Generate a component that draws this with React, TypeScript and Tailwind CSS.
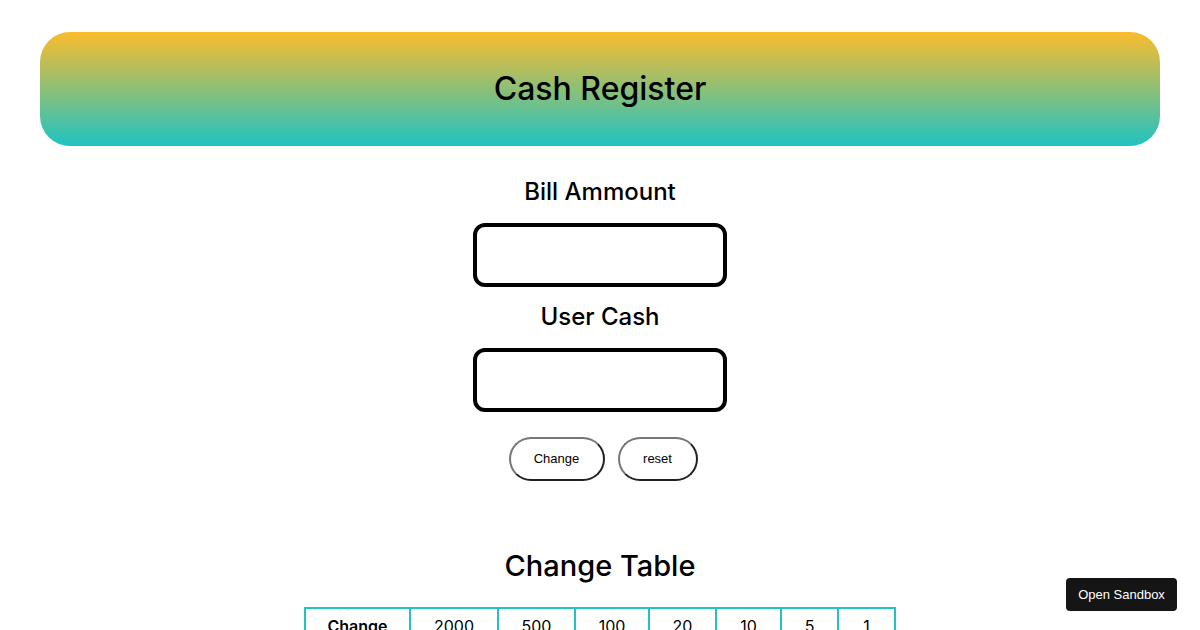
const NOTES = [2000, 500, 100, 20, 10, 5, 1];
const CELL_W = ['w-[88px]', 'w-[77px]', 'w-[74px]', 'w-[67px]', 'w-[65px]', 'w-[57px]', 'w-[57px]'];

export default function App() {
  return (
    <div className="relative min-h-screen bg-white font-['Inter',sans-serif] text-black">
      <div className="px-10 pt-8">
        {/* Header */}
        <header className="flex h-[114px] items-center justify-center rounded-[30px] bg-[linear-gradient(180deg,#fbbc2c,#1fc3c3)]">
          <h1 className="text-[32px] font-medium leading-none">Cash Register</h1>
        </header>

        {/* Inputs */}
        <div className="flex flex-col items-center">
          <label className="mt-[31px] text-[24px] font-medium leading-[30px]">Bill Ammount</label>
          <input className="mt-[16px] h-[64px] w-[254px] rounded-[12px] border-4 border-black px-3 text-lg outline-none" />
          <label className="mt-[15px] text-[24px] font-medium leading-[30px]">User Cash</label>
          <input className="mt-[16px] h-[64px] w-[254px] rounded-[12px] border-4 border-black px-3 text-lg outline-none" />

          <div className="mt-[25px] flex gap-[13px] pl-[6px]">
            <button className="h-[44px] w-[96px] rounded-full border-2 border-[#767676] bg-white font-['Liberation_Sans',sans-serif] text-[13px] [border-style:outset]">
              Change
            </button>
            <button className="h-[44px] w-[80px] rounded-full border-2 border-[#767676] bg-white font-['Liberation_Sans',sans-serif] text-[13px] [border-style:outset]">
              reset
            </button>
          </div>

          <h2 className="mt-[67px] text-[29px] font-medium leading-[36px]">Change Table</h2>

          <table className="mt-[23px] border-collapse border-2 border-[#1fc3c3] text-[16px]">
            <tbody>
              <tr>
                <th className="h-[36px] w-[105px] border-2 border-[#1fc3c3] font-semibold">Change</th>
                {NOTES.map((n, i) => (
                  <td key={n} className={`h-[36px] border-2 border-[#1fc3c3] text-center ${CELL_W[i]}`}>
                    {n}
                  </td>
                ))}
              </tr>
            </tbody>
          </table>
        </div>
      </div>

      <button className="absolute left-[1066px] top-[578px] h-[33px] w-[111px] rounded-[4px] bg-[#151515] font-['Liberation_Sans',sans-serif] text-[13px] text-white">
        Open Sandbox
      </button>
    </div>
  );
}
